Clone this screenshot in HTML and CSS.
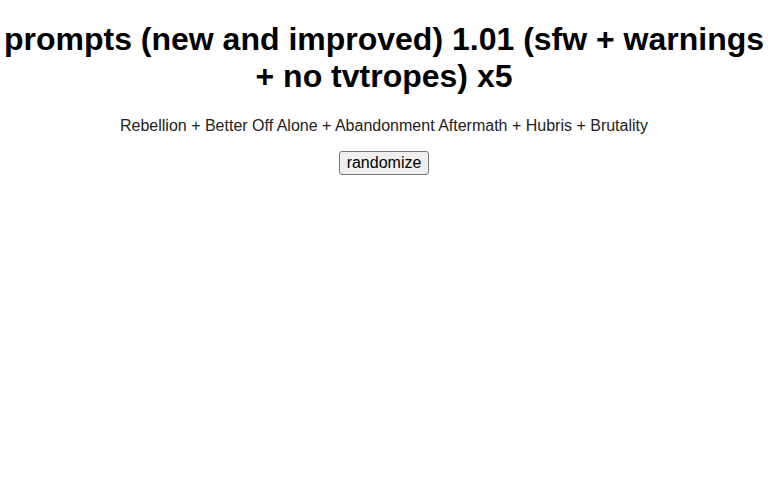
FILE: index.html
```html
<!DOCTYPE html>
<html lang="en">

<head>
    <meta charset="UTF-8">
    <meta name="viewport" content="width=device-width, initial-scale=1.0">
    <title>prompts</title>
    <link rel="stylesheet" href="styles.css">
</head>

<body>
    <div class="contenedor">
        <h1>prompts (new and improved) 1.01 (sfw + warnings + no tvtropes) x5</h1>
        <p id="prompt">Rebellion + Better Off Alone + Abandonment Aftermath + Hubris + Brutality</p>
        <button class="boton">randomize</button>
    </div>
</body>

</html>
```

FILE: styles.css
```css
body {
    margin: 0;
    padding: 0;
    font-family: "Liberation Sans", Arial, sans-serif;
    color: #000;
    background-color: #fff;
}

/* todo centrado */
.contenedor {
    display: flex;
    flex-direction: column;
    align-items: center;
    text-align: center;
}

h1 {
    font-size: 32px;
    margin: 21.44px 0;
    line-height: normal;
}

p {
    font-size: 16px;
    margin: 0 0 16px 0;
    line-height: normal;
    color: #222;
}

.boton {
    font-family: "Liberation Sans", Arial, sans-serif;
    font-size: 16px;
    line-height: normal;
    background-color: #efefef;
    border: 1px solid #767676;
    border-radius: 3px;
    padding: 2px 7px;
    color: #000;
    cursor: pointer;
}

.boton:hover {
    background-color: #e5e5e5;
}
```
